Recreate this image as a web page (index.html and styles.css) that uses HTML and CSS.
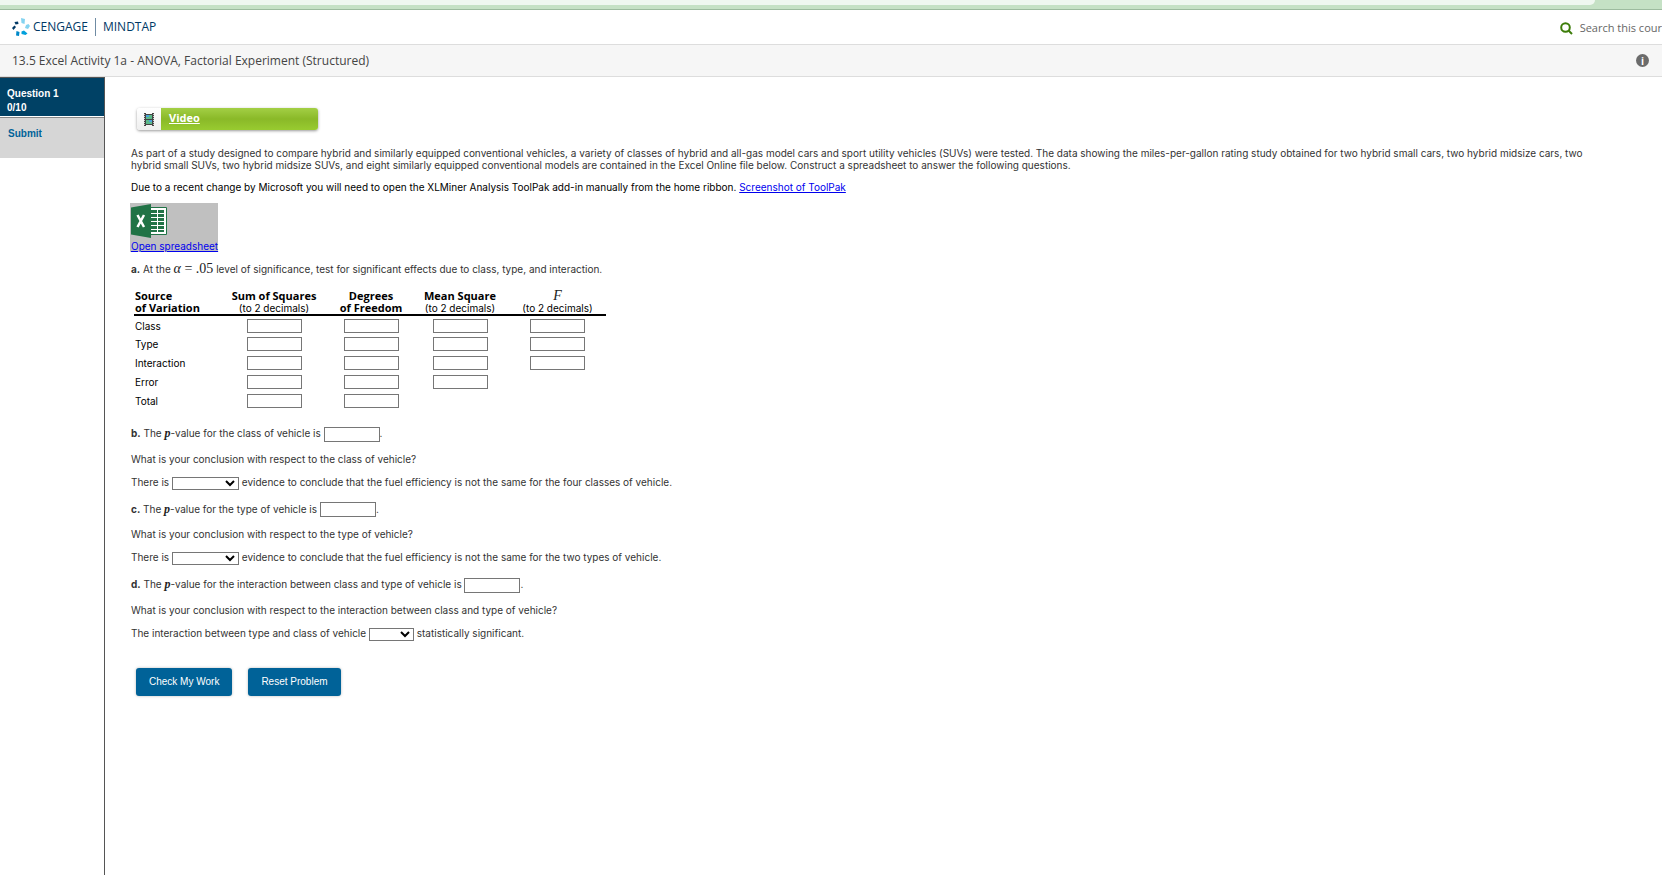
FILE: index.html
```html
<!DOCTYPE html>
<html lang="en">
<head>
<meta charset="utf-8">
<title>MindTap - 13.5 Excel Activity 1a</title>
<link rel="stylesheet" href="styles.css">
</head>
<body>
<div class="tabstrip"><div class="tabstrip-bar"></div></div>
<header class="topbar">
  <div class="brand">
    <svg class="brand-mark" viewBox="0 0 18 18" aria-hidden="true">
      <path fill="#84d3f0" d="M9 0l4 1-.5 5-3-1z"/>
      <path fill="#84d3f0" d="M14 7l2.500-1 1.500 2-2 3-3-1z"/>
      <path fill="#00a0dc" d="M9.500 13.500l2.500-1 3.500 3-2 1.500-4-1z"/>
      <path fill="#0088c8" d="M4.500 13l3 1-.5 4-3-.5z"/>
      <path fill="#003865" d="M0 10l2.500-2.500L4 9l-2.500 3z"/>
      <path fill="#003865" d="M2.500 4L6 3.500l.5 2.500-3 .5z"/>
    </svg>
    <span class="brand-name">CENGAGE</span>
    <span class="brand-product">MINDTAP</span>
  </div>
  <button class="search" type="button">
    <svg class="search-icon" viewBox="0 0 13 13" aria-hidden="true"><circle cx="5.500" cy="5.500" r="4.300"/><path d="M8.500 8.500L12 12"/></svg>
    <span>Search this cour</span>
  </button>
</header>
<div class="titlebar">
  <h1 class="title">13.5 Excel Activity 1a - ANOVA, Factorial Experiment (Structured)</h1>
  <button class="info" type="button" aria-label="Information">i</button>
</div>
<div class="layout">
  <nav class="sidebar">
    <a class="question" href="#q1">Question 1<br>0/10</a>
    <a class="submit" href="#submit">Submit</a>
  </nav>
  <main class="content">
    <div class="video">
      <span class="video-icon">
        <svg viewBox="0 0 10 13" aria-hidden="true">
          <path fill="#444" d="M0 0h2v1h6V0h2v13H8v-1H2v1H0z"/>
          <path fill="#5bb98a" d="M2 2h6v4H2zM2 7h6v4H2z"/>
          <path fill="#4aa3d8" d="M2 2h3v2H2zM5 7h3v2H5z"/>
          <path stroke="#ccc" stroke-dasharray="1 1" d="M.5 1v11M9.500 1v11"/>
        </svg>
      </span>
      <a class="video-link" href="#video">Video</a>
    </div>
    <p class="para intro">As part of a study designed to compare hybrid and similarly equipped conventional vehicles, a variety of classes of hybrid and all-gas model cars and sport utility vehicles (SUVs) were tested. The data showing the miles-per-gallon rating study obtained for two hybrid small cars, two hybrid midsize cars, two hybrid small SUVs, two hybrid midsize SUVs, and eight similarly equipped conventional models are contained in the Excel Online file below. Construct a spreadsheet to answer the following questions.</p>
    <p class="para notice">Due to a recent change by Microsoft you will need to open the XLMiner Analysis ToolPak add-in manually from the home ribbon. <a href="#toolpak">Screenshot of ToolPak</a></p>
    <a class="sheet" href="#sheet">
      <svg class="sheet-icon" viewBox="0 0 36 34" aria-hidden="true">
        <path fill="#fff" stroke="#217346" d="M18 3.500h17.500v27H18z"/>
        <path fill="#217346" d="M20 6h6v3h-6zM20 10h6v3h-6zM20 14h6v3h-6zM20 18h6v3h-6zM20 22h6v3h-6zM20 26h6v2h-6zM27 6h6v3h-6zM27 10h6v3h-6zM27 14h6v3h-6zM27 18h6v3h-6zM27 22h6v3h-6zM27 26h6v2h-6z"/>
        <path fill="#217346" d="M0 3.500L20 0v34L0 30.500z"/>
        <path fill="none" stroke="#fff" stroke-width="2.500" d="M6.500 11l6.500 12M13 11L6.500 23"/>
      </svg>
      <span>Open spreadsheet</span>
    </a>
    <p class="para part-a"><b>a.</b> At the <span class="math"><i>α</i> = .05</span> level of significance, test for significant effects due to class, type, and interaction.</p>
    <table class="anova">
      <thead>
        <tr>
          <th class="c-name">Source<br>of Variation</th>
          <th class="c-ss">Sum of Squares<br><span>(to 2 decimals)</span></th>
          <th class="c-df">Degrees<br>of Freedom</th>
          <th class="c-ms">Mean Square<br><span>(to 2 decimals)</span></th>
          <th class="c-f"><i class="math-f">F</i><br><span>(to 2 decimals)</span></th>
        </tr>
      </thead>
      <tbody>
        <tr><th>Class</th><td><input aria-label="Class sum of squares"></td><td><input aria-label="Class degrees of freedom"></td><td><input aria-label="Class mean square"></td><td class="c-f"><input aria-label="Class F"></td></tr>
        <tr><th>Type</th><td><input aria-label="Type sum of squares"></td><td><input aria-label="Type degrees of freedom"></td><td><input aria-label="Type mean square"></td><td class="c-f"><input aria-label="Type F"></td></tr>
        <tr><th>Interaction</th><td><input aria-label="Interaction sum of squares"></td><td><input aria-label="Interaction degrees of freedom"></td><td><input aria-label="Interaction mean square"></td><td class="c-f"><input aria-label="Interaction F"></td></tr>
        <tr><th>Error</th><td><input aria-label="Error sum of squares"></td><td><input aria-label="Error degrees of freedom"></td><td><input aria-label="Error mean square"></td><td></td></tr>
        <tr><th>Total</th><td><input aria-label="Total sum of squares"></td><td><input aria-label="Total degrees of freedom"></td><td></td><td></td></tr>
      </tbody>
    </table>
    <section class="part">
      <p class="row"><label for="pb"><b>b.</b> The <i class="math-p">p</i>-value for the class of vehicle is</label> <input id="pb">.</p>
      <p class="ask">What is your conclusion with respect to the class of vehicle?</p>
      <p class="row"><label for="sb">There is</label> <select class="wide" id="sb"><option></option><option>sufficient</option><option>insufficient</option></select> evidence to conclude that the fuel efficiency is not the same for the four classes of vehicle.</p>
    </section>
    <section class="part">
      <p class="row"><label for="pc"><b>c.</b> The <i class="math-p">p</i>-value for the type of vehicle is</label> <input id="pc">.</p>
      <p class="ask">What is your conclusion with respect to the type of vehicle?</p>
      <p class="row"><label for="sc">There is</label> <select class="wide" id="sc"><option></option><option>sufficient</option><option>insufficient</option></select> evidence to conclude that the fuel efficiency is not the same for the two types of vehicle.</p>
    </section>
    <section class="part">
      <p class="row"><label for="pd"><b>d.</b> The <i class="math-p">p</i>-value for the interaction between class and type of vehicle is</label> <input id="pd">.</p>
      <p class="ask">What is your conclusion with respect to the interaction between class and type of vehicle?</p>
      <p class="row"><label for="sd">The interaction between type and class of vehicle</label> <select class="narrow" id="sd"><option></option><option>is</option><option>is not</option></select> statistically significant.</p>
    </section>
    <div class="actions">
      <button type="button">Check My Work</button>
      <button type="button">Reset Problem</button>
    </div>
  </main>
</div>
</body>
</html>
```
FILE: styles.css
```css
* { box-sizing: border-box; }
body {
  margin: 0;
  min-height: 100vh;
  display: flex;
  flex-direction: column;
  overflow-x: hidden;
  background: #fff;
  color: #333;
  font: 10px/12px Inter, Verdana, sans-serif;
}
p, h1 { margin: 0; }
a { color: #00e; }
button { font: inherit; cursor: pointer; }

.tabstrip { height: 10px; background: #c5e1c5; border-bottom: 1px solid #9dbb9f; padding-right: 67px; }
.tabstrip-bar { height: 5px; background: #eff7f0; border-radius: 0 0 12px 0; }

.topbar {
  height: 35px;
  display: flex;
  align-items: center;
  justify-content: space-between;
  padding-left: 12px;
  border-bottom: 1px solid #ddd;
}
.brand { display: flex; align-items: center; color: #003865; font: 12px/18px "Open Sans", sans-serif; }
.brand-mark { width: 18px; height: 18px; margin-right: 3px; }
.brand-product { margin-left: 7px; padding-left: 7px; border-left: 1px solid #6f8ba3; }
.search {
  display: flex;
  align-items: center;
  gap: 7px;
  padding: 2px 0 0;
  border: 0;
  background: none;
  color: #666;
  font: 11px/16px "Open Sans", sans-serif;
  white-space: nowrap;
}
.search-icon { width: 13px; height: 13px; fill: none; stroke: #3d7d0a; stroke-width: 2; }

.titlebar {
  height: 32px;
  display: flex;
  align-items: center;
  justify-content: space-between;
  padding: 0 13px 0 12px;
  background: #f6f6f6;
  border-bottom: 1px solid #ddd;
}
.title { color: #444; font: 12px/16px "Open Sans", sans-serif; }
.info {
  width: 13px;
  height: 13px;
  padding: 0;
  border: 0;
  border-radius: 50%;
  background: #6b6b6b;
  color: #fff;
  font: bold 10px/12px "Open Sans", sans-serif;
}

.layout { flex: 1; display: flex; }
.sidebar {
  width: 105px;
  flex: none;
  border-right: 1px solid #555;
  font: bold 10px/14px "Liberation Sans", Arial, sans-serif;
}
.sidebar a { display: block; text-decoration: none; }
.sidebar .question { padding: 9px 7px 1px; border-top: 1px solid #555; background: #004165; color: #fff; }
.sidebar .submit { height: 41px; margin-top: 1px; padding: 9px 8px; border-top: 1px solid #888; background: #d6d6d6; color: #006298; }

.content { flex: 1; min-width: 0; padding: 31px 40px 30px 25px; }

.video {
  display: flex;
  width: 181px;
  height: 22px;
  margin: 0 0 17px 7px;
  border-radius: 3px;
  overflow: hidden;
  box-shadow: 0 1px 3px #999;
}
.video-icon { width: 24px; display: flex; align-items: center; justify-content: center; background: linear-gradient(#fff, #eee); }
.video-icon svg { width: 10px; height: 13px; }
.video-link {
  flex: 1;
  padding: 4px 8px;
  background: linear-gradient(#a3cf45, #8ab928 50%, #98cb30);
  color: #fff;
  font: bold 11px/12px "Open Sans", sans-serif;
}

.para { margin-bottom: 10px; padding-left: 1px; }
.intro { padding-right: 20px; }
.notice { color: #000; }
.sheet { display: block; width: 88px; padding: 1px 0 0 1px; background: #c0c0c0; white-space: nowrap; }
.sheet-icon { display: block; width: 36px; height: 34px; margin-bottom: 2px; }
.sheet span { display: block; }
.part-a { margin-top: 11px; }
.math, .math-f, .math-p { font-family: "Liberation Serif", "Times New Roman", serif; font-size: 14px; line-height: 10px; color: #222; }
.math-p { font-weight: bold; font-size: 12px; }

.anova { width: 472px; margin: 15px 0 0 4px; border-collapse: collapse; table-layout: fixed; color: #000; }
.anova th, .anova td { padding: 0; text-align: center; }
.anova thead th { border-bottom: 2px solid #000; vertical-align: bottom; font: bold 11px/12px "Open Sans", sans-serif; }
.anova thead span { font: 10px/12px Inter, Verdana, sans-serif; }
.anova .c-name, .anova tbody th { text-align: left; padding-left: 1px; }
.anova tbody th { font-weight: normal; }
.anova tbody td, .anova tbody th { height: 19px; padding-top: 1px; }
.anova .c-f { padding-left: 8px; }
.c-name { width: 91px; }
.c-ss { width: 98px; }
.c-df { width: 96px; }
.c-ms { width: 82px; }
.anova .math-f { font-weight: normal; }
input { width: 55px; height: 14px; padding: 0; border: 1px solid #767676; background: #fff; vertical-align: middle; }

.part { margin-top: 12px; padding-left: 1px; }
.anova + .part { margin-top: 16px; }
.row { line-height: 14px; }
.row input { width: 56px; height: 15px; }
.ask { margin: 11px 0 10px; }
select { height: 13px; padding: 0; border: 1px solid #767676; border-radius: 0; background: #fff; vertical-align: middle; font: 10px/11px "DejaVu Sans", sans-serif; }
.wide { width: 67px; }
.narrow { width: 45px; }

.actions { display: flex; gap: 16px; margin: 27px 0 0 6px; }
.actions button {
  height: 28px;
  padding: 0 13px;
  border: 0;
  border-radius: 3px;
  background: #006298;
  color: #fff;
  font: 10px/14px "Liberation Sans", Arial, sans-serif;
  box-shadow: 0 0 3px #bbb;
}
```
